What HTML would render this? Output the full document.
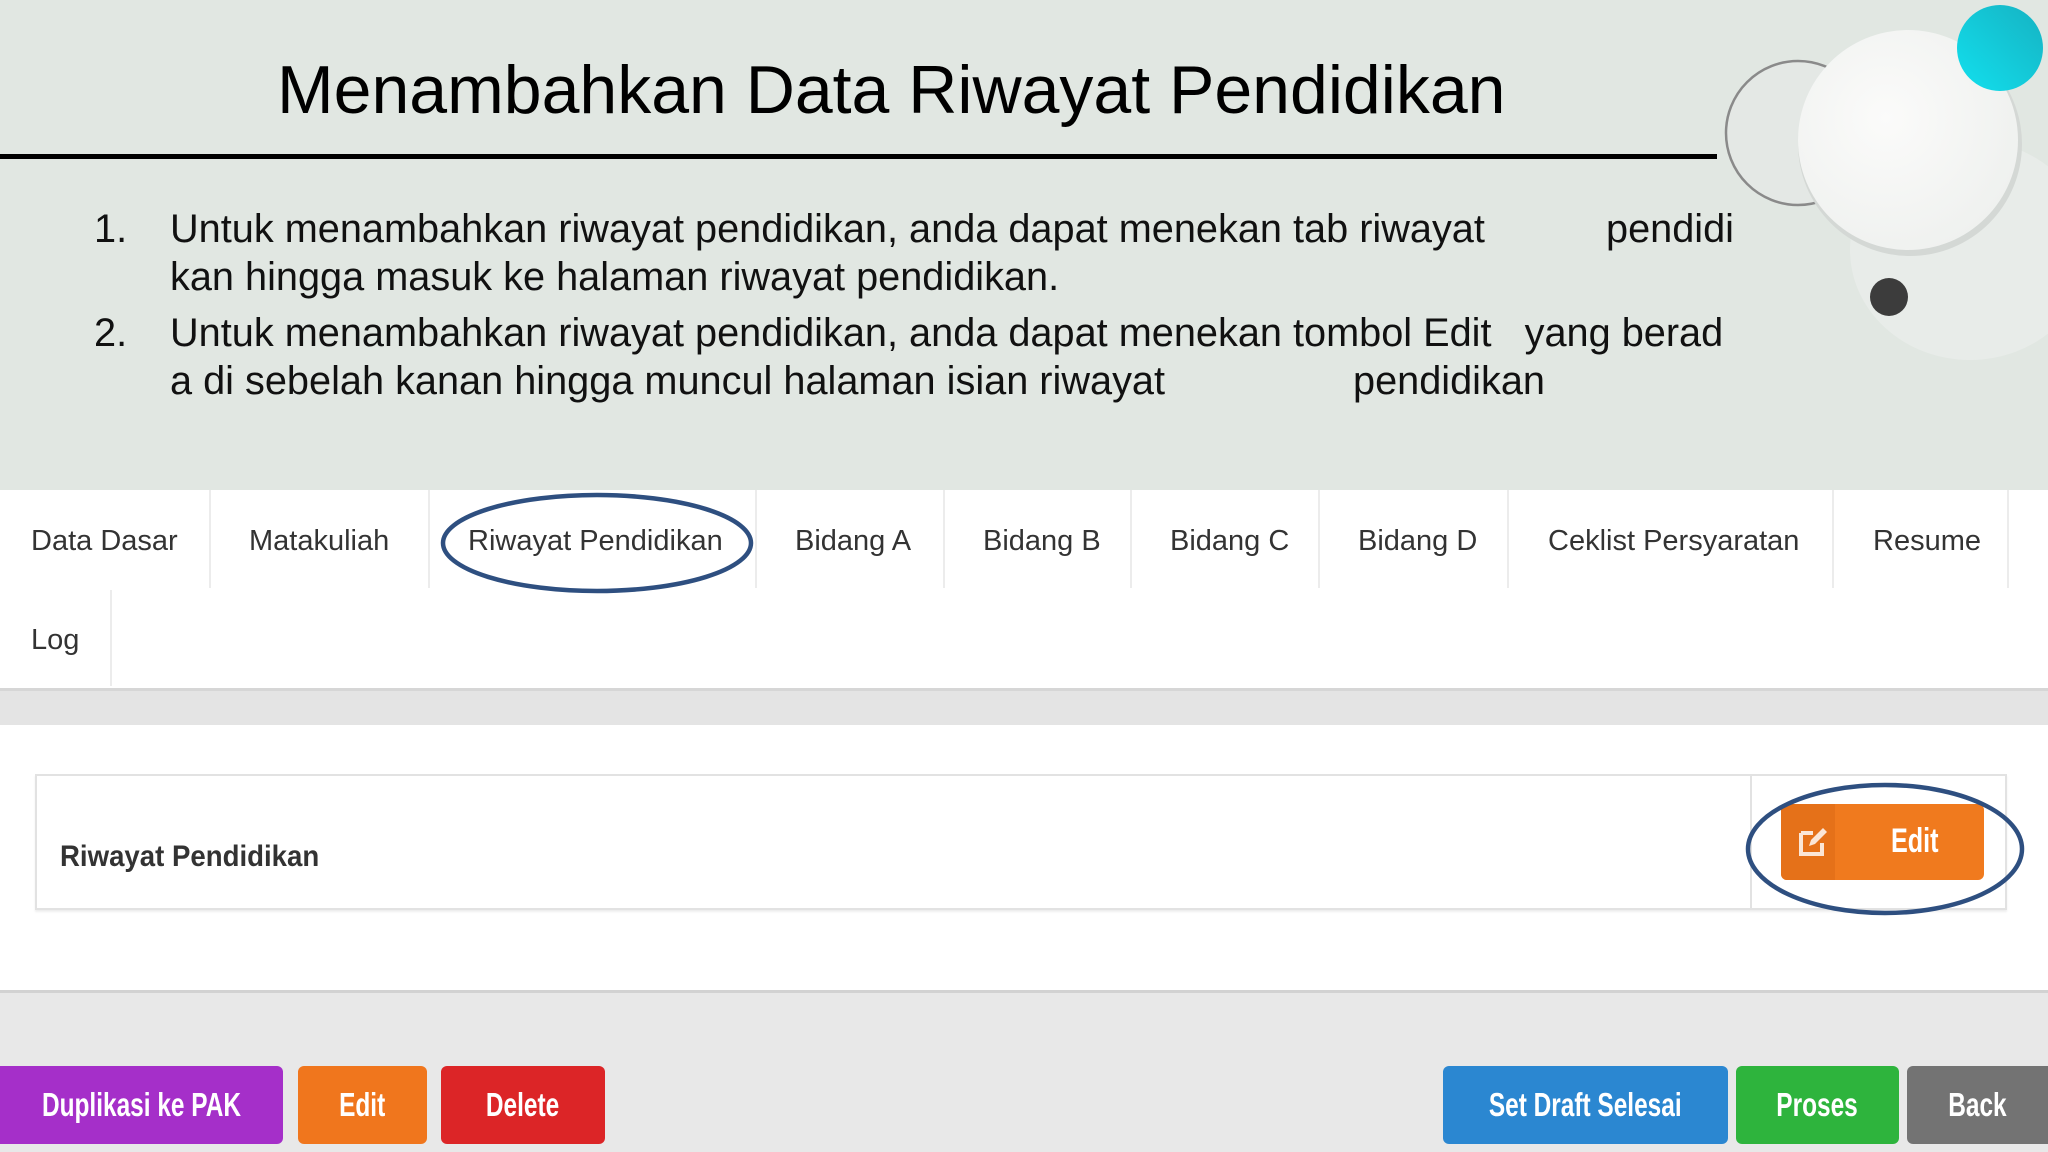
<!DOCTYPE html>
<html><head><meta charset="utf-8"><style>
*{margin:0;padding:0;box-sizing:border-box}
body{width:2048px;height:1152px;position:relative;overflow:hidden;background:#e8e8e8;font-family:"Liberation Sans",Arial,sans-serif}
.a{position:absolute;white-space:nowrap}
.top{position:absolute;left:0;top:0;width:2048px;height:490px;background:#e1e7e2}
.t{font-size:39.7px;color:#111;line-height:1}
.tab{font-size:29px;color:#333;top:524px;line-height:34px}
.sep{position:absolute;width:2px;background:#ececec}
.btn{position:absolute;top:1066px;height:78px;border-radius:6px;color:#fff;font-weight:bold;font-size:33px;display:flex;align-items:center;justify-content:center}
.btn span,.sx{display:inline-block;transform:scaleX(0.74)}
</style></head><body>
<div class="top"></div>
<svg class="a" style="left:1680px;top:0" width="368" height="360">
<defs><radialGradient id="g" cx="0.4" cy="0.4" r="0.7"><stop offset="0" stop-color="#fbfbfa"/><stop offset="1" stop-color="#eef0ee"/></radialGradient>
<linearGradient id="c" x1="0" y1="1" x2="1" y2="0"><stop offset="0" stop-color="#12e0ee"/><stop offset="1" stop-color="#16b2c2"/></linearGradient></defs>
<ellipse cx="290" cy="250" rx="120" ry="110" fill="#e8ece9"/>
<circle cx="118" cy="133" r="72" fill="#e4e8e5" stroke="#8a8a8a" stroke-width="2.5"/>
<circle cx="230" cy="144" r="112" fill="#d4d8d5"/>
<circle cx="228" cy="140" r="110" fill="url(#g)"/>
<circle cx="320" cy="48" r="43" fill="url(#c)"/>
<circle cx="209" cy="297" r="19" fill="#3c3c3c"/>
</svg>
<div class="a" style="left:277px;top:51px;font-size:68px;color:#000">Menambahkan Data Riwayat Pendidikan</div>
<div class="a" style="left:0;top:154px;width:1717px;height:5px;background:#000"></div>
<div class="a t" style="left:94px;top:210px">1.</div>
<div class="a t" style="left:170px;top:210px">Untuk menambahkan riwayat pendidikan, anda dapat menekan tab riwayat</div>
<div class="a t" style="left:1606px;top:210px">pendidi</div>
<div class="a t" style="left:170px;top:258px">kan hingga masuk ke halaman riwayat pendidikan.</div>
<div class="a t" style="left:94px;top:314px">2.</div>
<div class="a t" style="left:170px;top:314px">Untuk menambahkan riwayat pendidikan, anda dapat menekan tombol Edit&nbsp;&nbsp; yang berad</div>
<div class="a t" style="left:170px;top:362px">a di sebelah kanan hingga muncul halaman isian riwayat</div>
<div class="a t" style="left:1353px;top:362px">pendidikan</div>

<div class="a" style="left:0;top:490px;width:2048px;height:198px;background:#fff"></div>
<div class="a" style="left:0;top:688px;width:2048px;height:37px;background:#e4e4e4;border-top:3px solid #d6d6d6"></div>
<div class="sep" style="left:209px;top:490px;height:98px"></div>
<div class="sep" style="left:428px;top:490px;height:98px"></div>
<div class="sep" style="left:755px;top:490px;height:98px"></div>
<div class="sep" style="left:943px;top:490px;height:98px"></div>
<div class="sep" style="left:1130px;top:490px;height:98px"></div>
<div class="sep" style="left:1318px;top:490px;height:98px"></div>
<div class="sep" style="left:1507px;top:490px;height:98px"></div>
<div class="sep" style="left:1832px;top:490px;height:98px"></div>
<div class="sep" style="left:2007px;top:490px;height:98px"></div>
<div class="sep" style="left:110px;top:590px;height:96px"></div>
<div class="a tab" style="left:31px">Data Dasar</div>
<div class="a tab" style="left:249px">Matakuliah</div>
<div class="a tab" style="left:468px">Riwayat Pendidikan</div>
<div class="a tab" style="left:795px">Bidang A</div>
<div class="a tab" style="left:983px">Bidang B</div>
<div class="a tab" style="left:1170px">Bidang C</div>
<div class="a tab" style="left:1358px">Bidang D</div>
<div class="a tab" style="left:1548px">Ceklist Persyaratan</div>
<div class="a tab" style="left:1873px">Resume</div>
<div class="a tab" style="left:31px;top:623px">Log</div>

<div class="a" style="left:0;top:725px;width:2048px;height:268px;background:#fff;border-bottom:3px solid #d2d2d2"></div>
<div class="a" style="left:35px;top:774px;width:1972px;height:136px;border:2px solid #e2e2e2;box-shadow:0 2px 2px #eee"></div>
<div class="a" style="left:1750px;top:774px;width:2px;height:136px;background:#e2e2e2"></div>
<div class="a" style="left:60px;top:840px;font-size:30px;color:#333;font-weight:bold"><span class="sx" style="transform-origin:left;transform:scaleX(0.92)">Riwayat Pendidikan</span></div>
<div class="a" style="left:1781px;top:804px;width:203px;height:76px;background:#f07a1e;border-radius:6px;overflow:hidden">
<div style="position:absolute;left:0;top:0;width:54px;height:76px;background:#e57119"></div>
<svg style="position:absolute;left:17px;top:23px" width="32" height="30" viewBox="0 0 32 30"><path d="M3 6h12M3 6v21h21V16" fill="none" stroke="#fbe6d6" stroke-width="4"/><path d="M11 19l2-6 12-12 4 4-12 12z" fill="#fbe6d6"/></svg>
<div style="position:absolute;left:110px;top:18px;font-size:34px;color:#fff;font-weight:bold"><span class="sx" style="transform-origin:left">Edit</span></div>
</div>

<svg class="a" style="left:0;top:0" width="2048" height="1152">
<ellipse cx="597" cy="543" rx="154" ry="48" fill="none" stroke="#2e4f80" stroke-width="4.5"/>
<ellipse cx="1885" cy="849" rx="137" ry="64" fill="none" stroke="#2e4f80" stroke-width="4.5"/>
</svg>

<div class="btn" style="left:0;width:283px;background:#a52fc9;border-radius:0 6px 6px 0"><span>Duplikasi ke PAK</span></div>
<div class="btn" style="left:298px;width:129px;background:#f0761d"><span>Edit</span></div>
<div class="btn" style="left:441px;width:164px;background:#dc2527"><span>Delete</span></div>
<div class="btn" style="left:1443px;width:285px;background:#2b87d1"><span>Set Draft Selesai</span></div>
<div class="btn" style="left:1736px;width:163px;background:#2eb43d"><span>Proses</span></div>
<div class="btn" style="left:1907px;width:141px;background:#737373;border-radius:6px 0 0 6px"><span>Back</span></div>
</body></html>
